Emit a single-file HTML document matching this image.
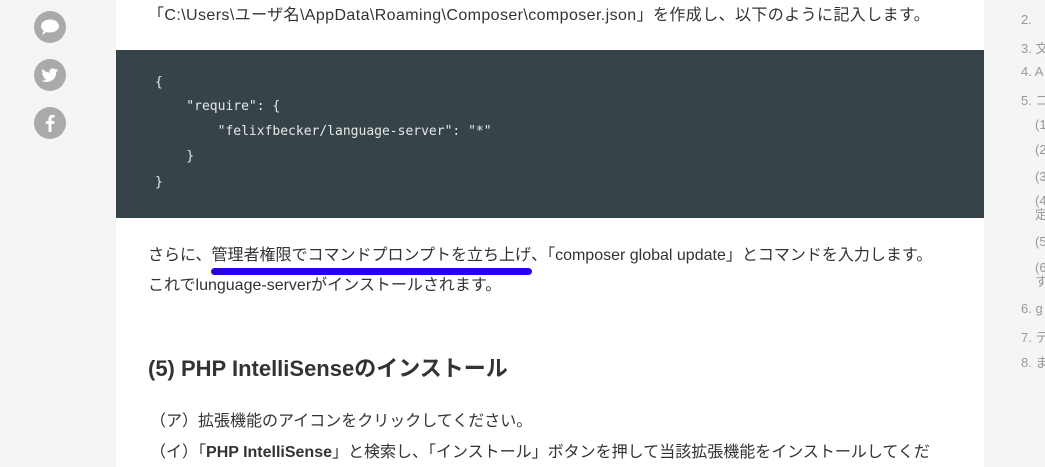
<!DOCTYPE html>
<html><head><meta charset="utf-8"><style>
*{margin:0;padding:0;box-sizing:border-box}
body{width:1045px;height:467px;overflow:hidden;background:#f5f5f5;font-family:"Liberation Sans","Noto Sans CJK JP",sans-serif;color:#333;position:relative}
.main{position:absolute;left:116px;top:0;width:868px;height:467px;background:#fff}
.t{position:absolute;white-space:nowrap;font-size:16px}
.code{position:absolute;left:116px;top:50px;width:868px;height:168px;background:#364349;color:#e8e8e8;font-family:"DejaVu Sans Mono","Liberation Mono",monospace;font-size:13px}
.code div{position:absolute;white-space:pre}
.ic{position:absolute;left:34px;width:32px;height:32px;border-radius:50%;background:#aaa}
.toc{position:absolute;left:1021px;font-size:13px;color:#999;white-space:nowrap}
</style></head><body>
<div class="main"></div>
<div class="t" style="left:148px;top:1px;letter-spacing:0.4px">「C:\Users\ユーザ名\AppData\Roaming\Composer\composer.json」を作成し、以下のように記入します。</div>
<div class="code">
<div style="left:39px;top:25px">{</div>
<div style="left:39px;top:49px">    "require": {</div>
<div style="left:39px;top:74px">        "felixfbecker/language-server": "*"</div>
<div style="left:39px;top:99px">    }</div>
<div style="left:39px;top:125px">}</div>
</div>
<div class="t" style="left:148px;top:241px">さらに、<span style="position:relative">管理者権限でコマンドプロンプトを立ち上げ<span style="position:absolute;left:-1px;right:-1px;top:21px;height:7px;background:#2a00e8;border-radius:4px"></span></span>、「composer global update」とコマンドを入力します。</div>
<div class="t" style="left:148px;top:271px">これでlunguage-serverがインストールされます。</div>
<div class="t" style="left:148px;top:351px;font-size:22px;font-weight:bold">(5) PHP IntelliSenseのインストール</div>
<div class="t" style="left:150px;top:407px">（ア）拡張機能のアイコンをクリックしてください。</div>
<div class="t" style="left:150px;top:438px">（イ）「<b>PHP IntelliSense</b>」と検索し、「インストール」ボタンを押して当該拡張機能をインストールしてくだ</div>
<div class="ic" style="top:11px"><svg width="32" height="32" viewBox="0 0 32 32"><ellipse cx="16" cy="15" rx="9" ry="6.5" fill="#fff"/><path d="M10 19 L8 24 L14 20Z" fill="#fff"/></svg></div>
<div class="ic" style="top:59px"><svg width="32" height="32" viewBox="0 0 32 32"><path d="M24 11c-.6.3-1.3.5-2 .6.7-.4 1.3-1.1 1.5-1.9-.7.4-1.4.7-2.2.8a3.4 3.4 0 0 0-5.8 3.1c-2.8-.1-5.3-1.5-7-3.6-.9 1.6-.4 3.6 1.1 4.6-.6 0-1.1-.2-1.5-.4 0 1.7 1.2 3.1 2.7 3.4-.5.1-1 .2-1.5.1.4 1.4 1.7 2.3 3.2 2.4-1.4 1.1-3.2 1.6-5 1.4 1.5 1 3.3 1.5 5.2 1.5 6.2 0 9.7-5.2 9.5-9.9.7-.5 1.3-1.1 1.7-1.7z" fill="#fff"/></svg></div>
<div class="ic" style="top:107px"><svg width="32" height="32" viewBox="0 0 32 32"><path d="M17.5 25v-8h2.6l.4-3h-3v-1.9c0-.9.3-1.5 1.5-1.5h1.6V8c-.3 0-1.2-.1-2.3-.1-2.3 0-3.8 1.4-3.8 3.9V14h-2.6v3h2.6v8z" fill="#fff"/></svg></div>
<div class="toc" style="top:12px">2.</div>
<div class="toc" style="top:38px">3. 文</div>
<div class="toc" style="top:64px">4. A</div>
<div class="toc" style="top:90px">5. コ</div>
<div class="toc" style="top:117px;left:1035px">(1</div>
<div class="toc" style="top:142px;left:1035px">(2</div>
<div class="toc" style="top:169px;left:1035px">(3</div>
<div class="toc" style="top:194px;left:1035px;line-height:14px">(4<br>定</div>
<div class="toc" style="top:234px;left:1035px">(5</div>
<div class="toc" style="top:261px;left:1035px;line-height:14px">(6<br>す</div>
<div class="toc" style="top:301px">6. g</div>
<div class="toc" style="top:327px">7. テ</div>
<div class="toc" style="top:352px">8. ま</div>
</body></html>
